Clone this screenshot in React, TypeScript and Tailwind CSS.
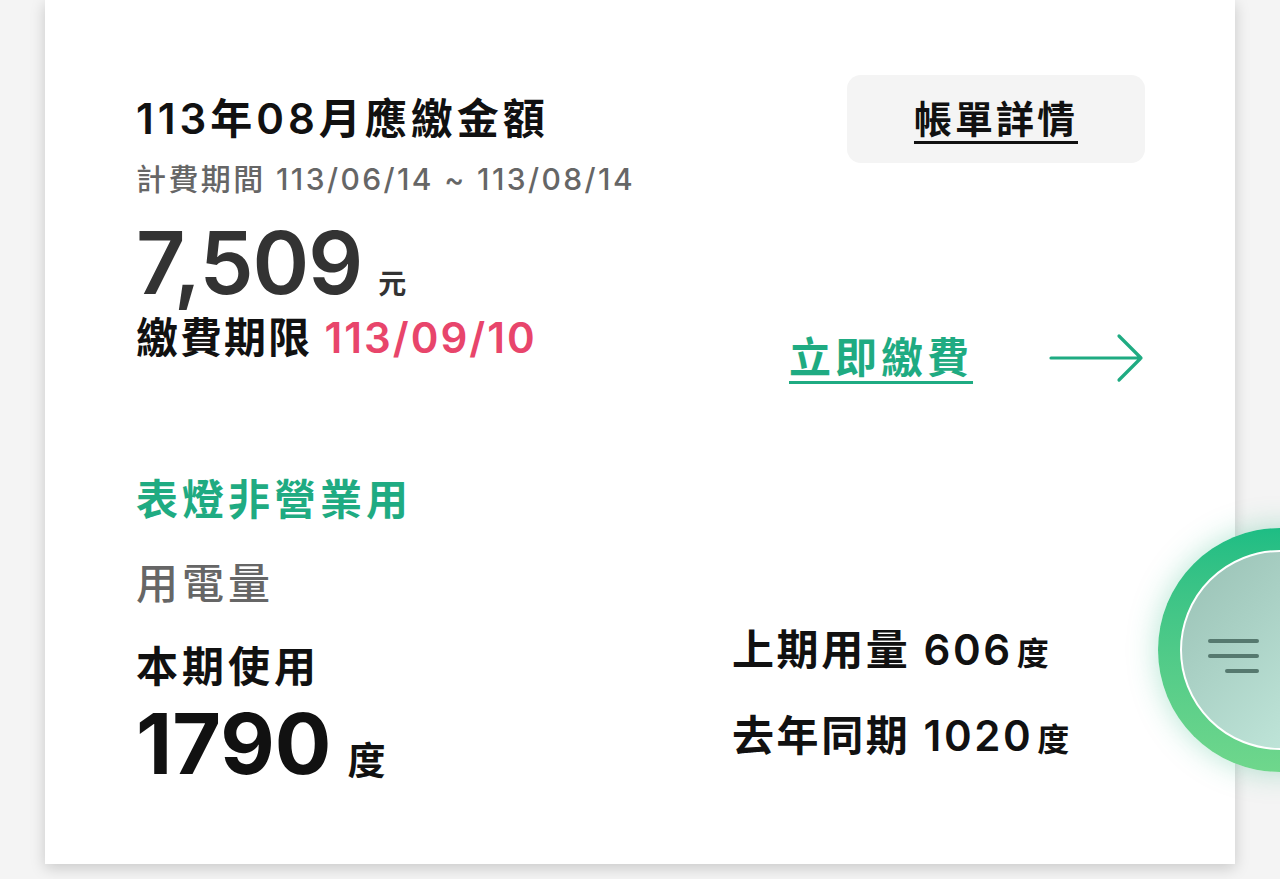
const font = { fontFamily: 'Inter, "Noto Sans CJK TC", sans-serif' }

function Arrow() {
  return (
    <svg width="96" height="50" viewBox="0 0 96 50" fill="none">
      <path d="M2 25 H92 M70 3 L92 25 L70 47" stroke="#1fab82" strokeWidth="3.2" strokeLinecap="round" strokeLinejoin="round" />
    </svg>
  )
}

function FloatingMenu() {
  return (
    <div className="absolute left-[1158px] top-[528px] w-[244px] h-[244px] rounded-full p-[22px] bg-gradient-to-b from-[#1dbd84] to-[#6fd78c] shadow-[0_0_30px_rgba(40,180,130,0.35)]">
      <div className="w-full h-full rounded-full border-2 border-white bg-gradient-to-br from-[#98c0b4] to-[#cbf0e4] flex flex-col gap-[11px] pl-[26px] pt-[87px]">
        <div className="w-[51px] h-[4px] rounded-full bg-[#56796f]" />
        <div className="w-[51px] h-[4px] rounded-full bg-[#56796f]" />
        <div className="ml-[17px] w-[34px] h-[4px] rounded-full bg-[#56796f]" />
      </div>
    </div>
  )
}

export default function App() {
  return (
    <div className="relative min-h-screen overflow-hidden bg-[#f4f4f4]" style={font}>
      <div className="ml-[45px] w-[1190px] h-[864px] bg-white shadow-[0_4px_14px_rgba(0,0,0,0.18)] pl-[91px] pr-[90px] pt-[75px]">
        <div className="flex justify-between">
          <div className="pt-[20px]">
            <div className="text-[42px] leading-[48px] tracking-[4px] font-semibold text-[#111]">113年08月應繳金額</div>
            <div className="mt-[18px] text-[30px] leading-[36px] tracking-[2.4px] font-medium text-[#666]">計費期間 113/06/14 ~ 113/08/14</div>
            <div className="mt-[23px] flex items-baseline text-[#333]">
              <span className="text-[86px] leading-[86px] font-semibold tracking-[-1px]">7,509</span>
              <span className="ml-[16px] text-[28px] font-semibold">元</span>
            </div>
            <div className="mt-[8px] text-[42px] leading-[48px] tracking-[2px] font-semibold text-[#111]">
              繳費期限 <span className="text-[#e8456b]">113/09/10</span>
            </div>
          </div>
          <div className="flex flex-col items-end w-[356px]">
            <button className="w-[298px] h-[88px] rounded-[14px] bg-[#f4f4f4] text-[38px] font-semibold tracking-[3px] text-[#111] underline underline-offset-[8px] decoration-[3px]">
              帳單詳情
            </button>
            <div className="mt-[170px] w-full flex items-center justify-between">
              <span className="text-[42px] leading-[48px] tracking-[4px] font-semibold text-[#1fab82] underline underline-offset-[8px] decoration-[3px]">立即繳費</span>
              <Arrow />
            </div>
          </div>
        </div>

        <div className="mt-[93px] grid grid-cols-[596px_1fr]">
          <div>
            <div className="text-[42px] leading-[48px] tracking-[4px] font-semibold text-[#1fab82]">表燈非營業用</div>
            <div className="mt-[36px] text-[42px] leading-[48px] tracking-[4px] font-medium text-[#666]">用電量</div>
            <div className="mt-[35px] text-[42px] leading-[48px] tracking-[4px] font-semibold text-[#111]">本期使用</div>
            <div className="mt-[11px] flex items-baseline text-[#111]">
              <span className="text-[84px] leading-[84px] font-bold">1790</span>
              <span className="ml-[16px] text-[38px] font-semibold">度</span>
            </div>
          </div>
          <div className="pt-[150px] text-[#111]">
            <div className="text-[42px] leading-[48px] tracking-[2.6px] font-semibold">
              上期用量 606<span className="ml-[4px] text-[32px]">度</span>
            </div>
            <div className="mt-[34px] text-[42px] leading-[48px] tracking-[2.6px] font-semibold">
              去年同期 1020<span className="ml-[4px] text-[32px]">度</span>
            </div>
          </div>
        </div>
      </div>
      <FloatingMenu />
    </div>
  )
}
